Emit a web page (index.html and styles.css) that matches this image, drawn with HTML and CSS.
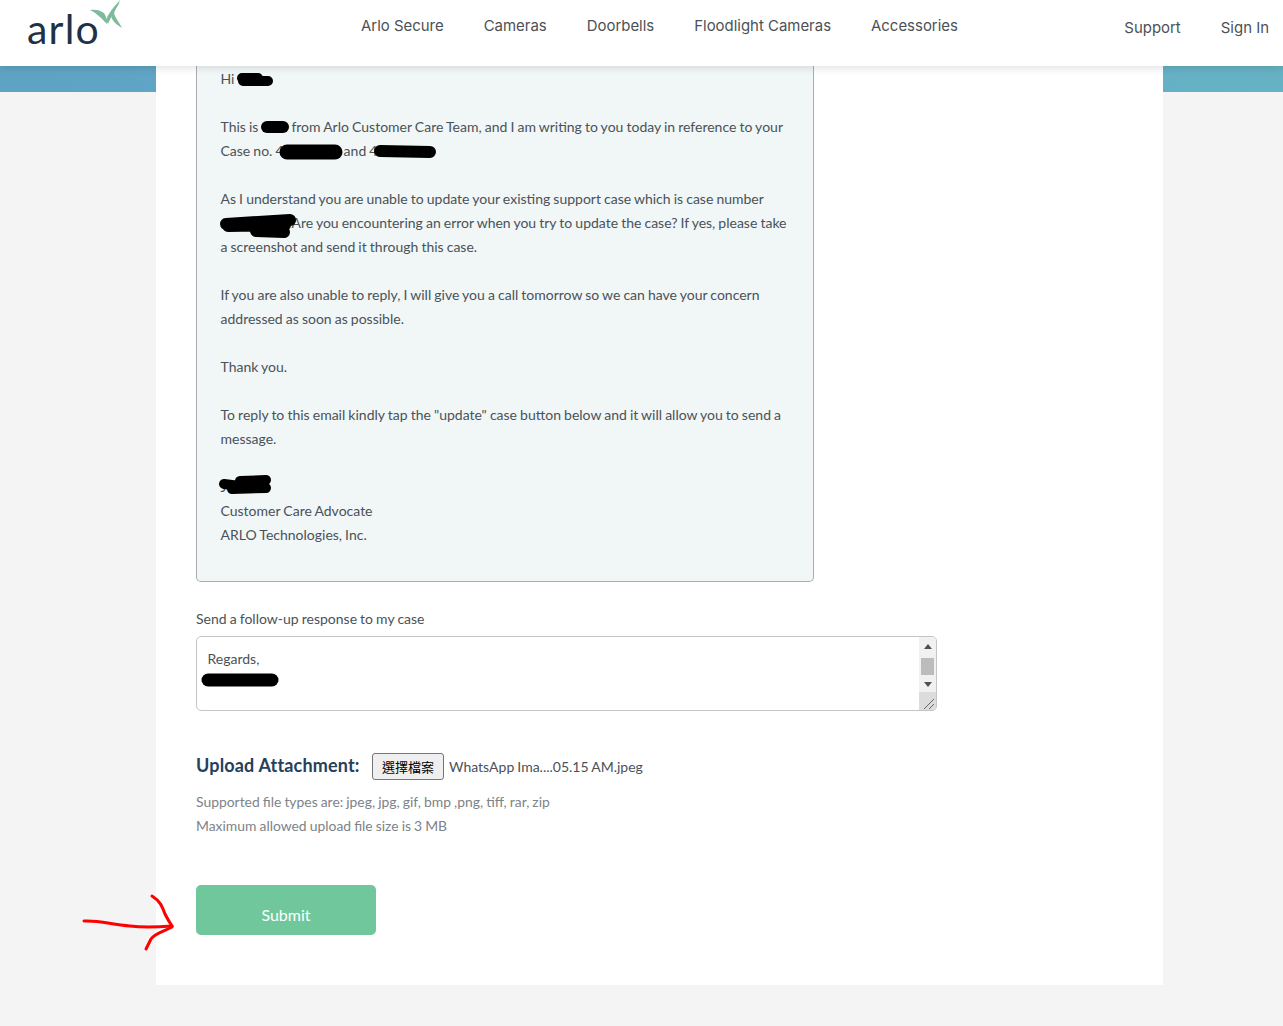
FILE: index.html
```html
<!DOCTYPE html>
<html lang="en">
<head>
    <meta charset="UTF-8">
    <meta name="viewport" content="width=device-width, initial-scale=1.0">
    <title>Arlo Support Case</title>
    <link rel="stylesheet" href="styles.css">
</head>
<body>

    <header class="site-header">
        <a class="logo" href="#">
            <span class="logo-word">arlo</span>
            <svg class="logo-bird" width="33" height="30" viewBox="0 0 33 30">
                <path d="M0 10 C5 9 10 10 14 13 C16 16 17 20 17 24 C13 20 8 14 0 10 Z" fill="#7dbb9c"/>
                <path d="M16 20 C19 12 25 6 30 0 C28 7 22 14 18 24 Z" fill="#7dbb9c"/>
                <path d="M30 3 C25 8 23 12 25 16 C27 20 30 24 32 28 C27 25 22 21 21 16 C20 10 25 6 30 3 Z" fill="#7dbb9c"/>
            </svg>
        </a>
        <nav class="main-nav">
            <a href="#">Arlo Secure</a>
            <a href="#">Cameras</a>
            <a href="#">Doorbells</a>
            <a href="#">Floodlight Cameras</a>
            <a href="#">Accessories</a>
        </nav>
        <nav class="user-nav">
            <a href="#">Support</a>
            <a href="#">Sign In</a>
        </nav>
    </header>

    <main class="page">
        <div class="container">
            <div class="case-message">
                <p>Hi<span class="gap gap-hi"></span></p>
                <p>This is<span class="gap gap-name"></span>from Arlo Customer Care Team, and I am writing to you today in reference to your<br>Case no. 4<span class="gap gap-case"></span>and 4<span class="gap gap-case2"></span></p>
                <p>As I understand you are unable to update your existing support case which is case number<br><span class="gap gap-long"></span>Are you encountering an error when you try to update the case? If yes, please take<br>a screenshot and send it through this case.</p>
                <p>If you are also unable to reply, I will give you a call tomorrow so we can have your concern<br>addressed as soon as possible.</p>
                <p>Thank you.</p>
                <p>To reply to this email kindly tap the "update" case button below and it will allow you to send a<br>message.</p>
                <p class="signature">J<br>Customer Care Advocate<br>ARLO Technologies, Inc.</p>
            </div>

            <div class="follow-up-label">Send a follow-up response to my case</div>
            <div class="reply-box">
                <div class="reply-text">Regards,<br>J</div>
                <div class="scroll-bar">
                    <span class="arrow-up"></span>
                    <span class="scroll-thumb"></span>
                    <span class="arrow-down"></span>
                    <span class="resize-grip">
                        <svg width="17" height="18" viewBox="0 0 17 18"><path d="M5 17 L15 7 M10 17 L15 12" stroke="#666" stroke-width="1" fill="none"/></svg>
                    </span>
                </div>
            </div>

            <div class="upload-row">
                <span class="upload-title">Upload Attachment:</span>
                <button class="file-button">選擇檔案</button>
                <span class="file-name">WhatsApp Ima....05.15 AM.jpeg</span>
            </div>
            <div class="upload-hint">Supported file types are: jpeg, jpg, gif, bmp ,png, tiff, rar, zip<br>Maximum allowed upload file size is 3 MB</div>

            <button class="submit-button">Submit</button>
        </div>
    </main>

    <!-- marks drawn on top of the screenshot by hand -->
    <svg class="scribbles" width="1283" height="1026" viewBox="0 0 1283 1026">
        <g fill="none" stroke="#000" stroke-linecap="round" stroke-linejoin="round">
            <path d="M242 78 L258 78 M243 81 L268 81" stroke-width="10"/>
            <path d="M267 127 L283 127" stroke-width="12"/>
            <path d="M287 152 L335 152" stroke-width="15"/>
            <path d="M380 151 L430 152" stroke-width="12"/>
            <path d="M226 224 L290 220 M228 226 L285 225 M256 231 L284 232" stroke-width="12"/>
            <path d="M224 484 L240 486 M240 481 L266 480 M232 489 L266 488" stroke-width="10"/>
            <path d="M208 680 L272 680" stroke-width="13"/>
        </g>
        <g fill="none" stroke="#f00" stroke-width="3" stroke-linecap="round" stroke-linejoin="round">
            <path d="M84 921 C100 920 112 925 130 926 C145 928 160 927 172 926"/>
            <path d="M152 896 C160 901 162 906 165 914 C168 920 170 923 172 926"/>
            <path d="M172 927 C165 931 155 933 151 939 L146 949"/>
        </g>
    </svg>

</body>
</html>
```

FILE: styles.css
```css
* {
    box-sizing: border-box;
}

body {
    margin: 0;
    background: #f4f4f4;
    font-family: Lato, Arial, sans-serif;
    font-size: 14px;
    line-height: 24px;
    word-spacing: -0.5px;
    color: #4a5257;
}

a {
    color: inherit;
    text-decoration: none;
}

.site-header {
    position: relative;
    z-index: 2;
    display: flex;
    height: 66px;
    background: #fff;
    box-shadow: 0 2px 8px rgba(0, 0, 0, 0.12);
    font-family: Inter, Arial, sans-serif;
    font-size: 14.95px;
    word-spacing: 0;
    color: #4b5156;
}

.logo {
    display: flex;
    width: 361px;
    padding-left: 27px;
}

.logo-word {
    width: 63px;
    margin-top: 6px;
    font-family: Lato, Arial, sans-serif;
    font-size: 41px;
    line-height: 46px;
    letter-spacing: 1.2px;
    color: #1f3245;
}

.main-nav {
    display: flex;
    gap: 40px;
    padding-top: 14px;
}

.user-nav {
    display: flex;
    gap: 40px;
    margin-left: auto;
    padding-top: 16px;
    padding-right: 14px;
}

.page {
    height: 960px;
    background: linear-gradient(90deg, #5fa3c4, #66b2c4) no-repeat top / 100% 26px;
}

.container {
    width: 1007px;
    height: 919px;
    margin-left: 156px;
    padding-left: 40px;
    background: #fff;
}

.case-message {
    width: 618px;
    padding: 1px 24px 34px 23.5px;
    background: #f1f6f7;
    border: 1px solid #a9adaf;
    border-top: 0;
    border-radius: 0 0 5px 5px;
    white-space: nowrap;
}

.case-message p {
    margin: 0 0 24px;
}

.case-message .signature {
    margin: 0;
}

.gap {
    display: inline-block;
}

.gap-hi { width: 36px; }
.gap-name { width: 33px; }
.gap-case { width: 60px; }
.gap-case2 { width: 60px; }
.gap-long { width: 71px; }

.follow-up-label {
    margin-top: 25px;
    margin-bottom: 5px;
}

.reply-box {
    display: flex;
    width: 741px;
    height: 75px;
    background: #fff;
    border: 1px solid #c4c4c4;
    border-radius: 5px;
}

.reply-text {
    flex: 1;
    padding: 11px 10.5px;
    line-height: 21px;
}

.scroll-bar {
    display: flex;
    flex-direction: column;
    align-items: center;
    width: 17px;
    background: #f1f1f1;
    border-radius: 0 4px 4px 0;
}

.arrow-up {
    margin-top: 7px;
    border: 4px solid transparent;
    border-top: 0;
    border-bottom: 5px solid #505050;
}

.scroll-thumb {
    width: 13px;
    height: 17px;
    margin-top: 9px;
    background: #bcbcbc;
}

.arrow-down {
    margin-top: 7px;
    border: 4px solid transparent;
    border-bottom: 0;
    border-top: 5px solid #505050;
}

.resize-grip {
    display: block;
    width: 17px;
    height: 18px;
    margin-top: auto;
    background: #dcdcdc;
}

.upload-row {
    display: flex;
    align-items: center;
    margin-top: 41px;
    height: 28px;
}

.upload-title {
    width: 176px;
    padding-bottom: 2px;
    font-size: 18px;
    font-weight: 700;
    letter-spacing: 0.17px;
    word-spacing: 0;
    color: #25405c;
}

.file-button {
    width: 72px;
    height: 27px;
    padding: 0;
    background: #efefef;
    border: 1px solid #767676;
    border-radius: 3px;
    font-family: "Noto Sans CJK TC", sans-serif;
    font-size: 13px;
    color: #000;
}

.file-name {
    margin-left: 5px;
    padding-top: 2px;
}

.upload-hint {
    margin-top: 10px;
    font-size: 13.9px;
    color: #7d8387;
}

.submit-button {
    display: block;
    width: 180px;
    height: 50px;
    margin-top: 47px;
    padding-top: 10px;
    background: #6fc79b;
    border: 0;
    border-radius: 5px;
    font-family: Lato, Arial, sans-serif;
    font-size: 16px;
    color: #fff;
}

.scribbles {
    position: absolute;
    top: 0;
    left: 0;
    z-index: 3;
    pointer-events: none;
}
```
